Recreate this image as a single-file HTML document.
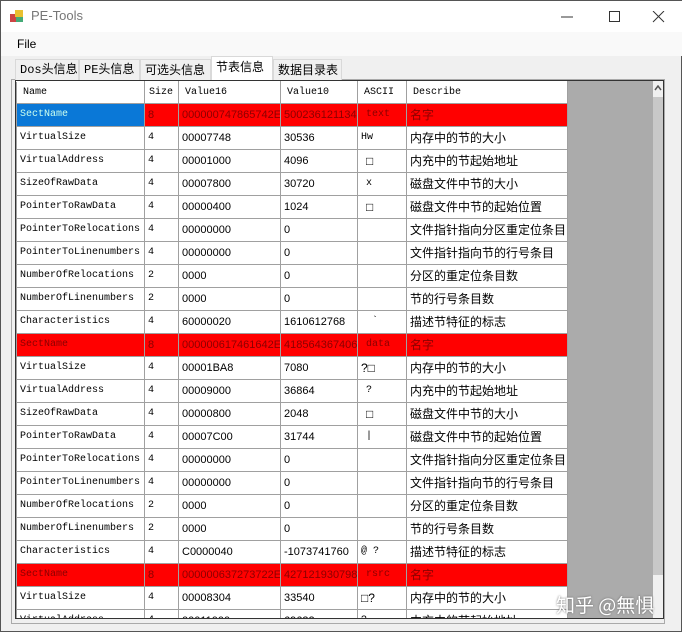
<!DOCTYPE html>
<html><head><meta charset="utf-8"><style>
*{margin:0;padding:0;box-sizing:border-box}
body{width:682px;height:632px;overflow:hidden;background:#f0f0f0;position:relative;font-family:"Liberation Sans","Noto Sans CJK SC",sans-serif;border:1px solid #555}
.title{position:absolute;left:0;top:0;width:682px;height:31px;background:#fff}
.title span{position:absolute;left:30px;top:7px;font-size:13px;color:#777}
.menu{position:absolute;left:0;top:31px;width:682px;height:24px;background:#f9f9f9}
.menu span{position:absolute;left:16px;top:5px;font-size:12px}
.tab{position:absolute;top:58px;height:21px;font-size:12px;border:1px solid #d9d9d9;border-bottom:none;background:#f0f0f0;padding:2px 4px;font-family:"Liberation Mono","Noto Sans CJK SC",monospace;white-space:nowrap;line-height:16px}
.tab.sel{top:55px;height:24px;background:#fff;font-family:"Liberation Sans","Noto Sans CJK SC",sans-serif}
.panel{position:absolute;left:10px;top:78px;width:654px;height:545px;border:1px solid #aaa;background:#f0f0f0}
.grid{position:absolute;left:14px;top:79px;width:649px;height:539px;background:#ababab;border:1px solid #333;overflow:hidden}
table{position:absolute;left:0;top:0;width:551px;border-collapse:collapse;table-layout:fixed;background:#fff}
td{border:1px solid #a0a0a0;height:23px;line-height:14px;font-size:10px;font-family:"Liberation Mono",monospace;padding:0 0 0 3px;white-space:nowrap;overflow:hidden}
tr.h td{height:22px;border-color:#fff #a0a0a0 #a0a0a0 #a0a0a0;padding-left:6px}
td.n{font-family:"Liberation Sans",sans-serif;font-size:11px}
td.c{font-family:"Liberation Sans","Noto Sans CJK SC",sans-serif;font-size:12px}
tr.r td{background:#f00;color:#8a0000}
tr.r td.s{background:#0a78d7;color:#cfe}
.sb{position:absolute;left:652px;top:80px;width:10px;height:537px;background:#f0f0f0}
.sb i{position:absolute;left:0;top:16px;width:10px;height:478px;background:#c8c8c8}
.wm{position:absolute;left:555px;top:590px;font-size:19px;color:#fff;text-shadow:0 0 2px #666;font-family:"Noto Sans CJK SC",sans-serif}
</style></head><body>
<div class="title"><svg style="position:absolute;left:9px;top:9px" width="14" height="13"><rect x="0" y="4" width="6" height="8" fill="#c44"/><rect x="5" y="0" width="8" height="7" fill="#e8c030"/><rect x="6" y="7" width="7" height="5" fill="#4a7"/></svg><span>PE-Tools</span>
<svg style="position:absolute;left:560px;top:10px" width="110" height="12"><line x1="0" y1="6" x2="12" y2="6" stroke="#333"/><rect x="48.5" y="0.5" width="10" height="10" fill="none" stroke="#333"/><path d="M92 0L103 11M103 0L92 11" stroke="#333"/></svg></div>
<div class="menu"><span>File</span></div>
<div class="panel"></div>
<div class="tab" style="left:14px;width:64px">Dos头信息</div>
<div class="tab" style="left:78px;width:61px">PE头信息</div>
<div class="tab" style="left:139px;width:71px;font-family:'Liberation Sans','Noto Sans CJK SC',sans-serif">可选头信息</div>
<div class="tab" style="left:272px;width:69px;font-family:'Liberation Sans','Noto Sans CJK SC',sans-serif">数据目录表</div>
<div class="tab sel" style="left:210px;width:62px">节表信息</div>
<div class="grid">
<table>
<colgroup><col style="width:128px"><col style="width:34px"><col style="width:102px"><col style="width:77px"><col style="width:49px"><col style="width:161px"></colgroup>
<tr class="h"><td>Name</td><td style="padding-left:4px">Size</td><td>Value16</td><td>Value10</td><td>ASCII</td><td>Describe</td></tr>
<tr class="r"><td class="s">SectName</td><td class="n">8</td><td class="n">000000747865742E</td><td class="n">500236121134</td><td style="padding-left:8px">text</td><td class="c">名字</td></tr>
<tr><td>VirtualSize</td><td>4</td><td class="n">00007748</td><td class="n">30536</td><td>Hw</td><td class="c">内存中的节的大小</td></tr>
<tr><td>VirtualAddress</td><td>4</td><td class="n">00001000</td><td class="n">4096</td><td class="c" style="padding-left:8px">□</td><td class="c">内充中的节起始地址</td></tr>
<tr><td>SizeOfRawData</td><td>4</td><td class="n">00007800</td><td class="n">30720</td><td style="padding-left:8px">x</td><td class="c">磁盘文件中节的大小</td></tr>
<tr><td>PointerToRawData</td><td>4</td><td class="n">00000400</td><td class="n">1024</td><td class="c" style="padding-left:8px">□</td><td class="c">磁盘文件中节的起始位置</td></tr>
<tr><td>PointerToRelocations</td><td>4</td><td class="n">00000000</td><td class="n">0</td><td></td><td class="c">文件指针指向分区重定位条目</td></tr>
<tr><td>PointerToLinenumbers</td><td>4</td><td class="n">00000000</td><td class="n">0</td><td></td><td class="c">文件指针指向节的行号条目</td></tr>
<tr><td>NumberOfRelocations</td><td>2</td><td class="n">0000</td><td class="n">0</td><td></td><td class="c">分区的重定位条目数</td></tr>
<tr><td>NumberOfLinenumbers</td><td>2</td><td class="n">0000</td><td class="n">0</td><td></td><td class="c">节的行号条目数</td></tr>
<tr><td>Characteristics</td><td>4</td><td class="n">60000020</td><td class="n">1610612768</td><td style="padding-left:14px">`</td><td class="c">描述节特征的标志</td></tr>
<tr class="r"><td>SectName</td><td class="n">8</td><td class="n">000000617461642E</td><td class="n">418564367406</td><td style="padding-left:8px">data</td><td class="c">名字</td></tr>
<tr><td>VirtualSize</td><td>4</td><td class="n">00001BA8</td><td class="n">7080</td><td class="c">?□</td><td class="c">内存中的节的大小</td></tr>
<tr><td>VirtualAddress</td><td>4</td><td class="n">00009000</td><td class="n">36864</td><td style="padding-left:8px">?</td><td class="c">内充中的节起始地址</td></tr>
<tr><td>SizeOfRawData</td><td>4</td><td class="n">00000800</td><td class="n">2048</td><td class="c" style="padding-left:8px">□</td><td class="c">磁盘文件中节的大小</td></tr>
<tr><td>PointerToRawData</td><td>4</td><td class="n">00007C00</td><td class="n">31744</td><td style="padding-left:8px">|</td><td class="c">磁盘文件中节的起始位置</td></tr>
<tr><td>PointerToRelocations</td><td>4</td><td class="n">00000000</td><td class="n">0</td><td></td><td class="c">文件指针指向分区重定位条目</td></tr>
<tr><td>PointerToLinenumbers</td><td>4</td><td class="n">00000000</td><td class="n">0</td><td></td><td class="c">文件指针指向节的行号条目</td></tr>
<tr><td>NumberOfRelocations</td><td>2</td><td class="n">0000</td><td class="n">0</td><td></td><td class="c">分区的重定位条目数</td></tr>
<tr><td>NumberOfLinenumbers</td><td>2</td><td class="n">0000</td><td class="n">0</td><td></td><td class="c">节的行号条目数</td></tr>
<tr><td>Characteristics</td><td>4</td><td class="n">C0000040</td><td class="n">-1073741760</td><td>@ ?</td><td class="c">描述节特征的标志</td></tr>
<tr class="r"><td>SectName</td><td class="n">8</td><td class="n">000000637273722E</td><td class="n">427121930798</td><td style="padding-left:8px">rsrc</td><td class="c">名字</td></tr>
<tr><td>VirtualSize</td><td>4</td><td class="n">00008304</td><td class="n">33540</td><td class="c">□?</td><td class="c">内存中的节的大小</td></tr>
<tr><td>VirtualAddress</td><td>4</td><td class="n">00011000</td><td class="n">69632</td><td>?</td><td class="c">内充中的节起始地址</td></tr>
</table>
<div class="sb" style="left:637px;top:0"><svg style="position:absolute;left:1px;top:4px" width="8" height="6"><path d="M1 5L4 1L7 5" stroke="#555" fill="none" stroke-width="1.5"/></svg><i></i></div>
</div>
<div class="wm">知乎 @無惧</div>
</body></html>
